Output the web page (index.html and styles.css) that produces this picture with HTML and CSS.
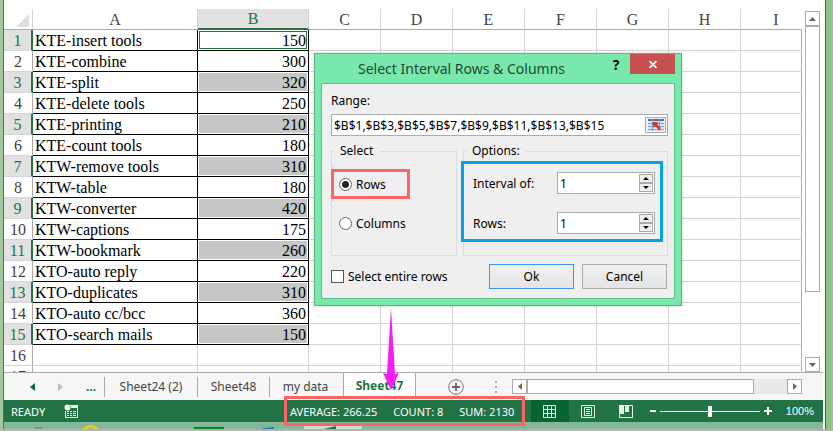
FILE: index.html
```html
<!DOCTYPE html>
<html lang="en">
<head>
    <meta charset="UTF-8">
    <meta name="viewport" content="width=device-width, initial-scale=1.0">
    <title>Select Interval Rows &amp; Columns</title>
    <link rel="stylesheet" href="styles.css">
</head>
<body>
    <div class="window">
        <div class="workspace">
            <table class="sheet">
                <colgroup>
                    <col class="col-head">
                    <col class="col-a">
                    <col class="col-b">
                    <col class="col-std" span="6">
                    <col>
                </colgroup>
                <thead>
                    <tr><th class="corner"><svg width="13" height="13" viewBox="0 0 13 13"><path d="M13 0V13H0z" fill="#dfdfdf"/></svg></th><th>A</th><th class="active">B</th><th>C</th><th>D</th><th>E</th><th>F</th><th>G</th><th>H</th><th>I</th></tr>
                </thead>
                <tbody id="rows"></tbody>
            </table>
            <div class="vscroll">
                <button type="button" class="arrow" aria-label="Scroll up"><svg width="7" height="4" viewBox="0 0 7 4"><path d="M0 4L3.500 0L7 4z" fill="#666"/></svg></button>
                <div class="thumb"></div>
                <button type="button" class="arrow" aria-label="Scroll down"><svg width="7" height="4" viewBox="0 0 7 4"><path d="M0 0H7L3.500 4z" fill="#666"/></svg></button>
            </div>
        </div>

        <div class="tabbar">
            <div class="tab-nav">
                <button type="button" aria-label="Previous sheet"><svg width="5" height="8" viewBox="0 0 5 8"><path d="M5 0V8L0 4z" fill="#0f6b3a"/></svg></button>
                <button type="button" aria-label="Next sheet"><svg width="5" height="8" viewBox="0 0 5 8"><path d="M0 0V8L5 4z" fill="#bbb"/></svg></button>
                <button type="button" class="more">...</button>
            </div>
            <button type="button" class="tab tab-wide">Sheet24 (2)</button>
            <button type="button" class="tab">Sheet48</button>
            <button type="button" class="tab">my data</button>
            <button type="button" class="tab current">Sheet47</button>
            <button type="button" class="add" aria-label="New sheet"><svg width="16" height="16" viewBox="0 0 16 16"><circle cx="8" cy="8" r="7.300" fill="none" stroke="#777"/><path d="M8 4V12M4 8H12" stroke="#666" stroke-width="1.800"/></svg></button>
            <svg class="grip" width="3" height="12" viewBox="0 0 3 12"><path d="M0 1h2M0 6h2M0 11h2" stroke="#aaa" stroke-width="2"/></svg>
            <div class="hscroll">
                <button type="button" class="arrow" aria-label="Scroll left"><svg width="4" height="7" viewBox="0 0 4 7"><path d="M4 0V7L0 3.500z" fill="#666"/></svg></button>
                <div class="thumb"></div>
                <button type="button" class="arrow" aria-label="Scroll right"><svg width="4" height="7" viewBox="0 0 4 7"><path d="M0 0V7L4 3.500z" fill="#666"/></svg></button>
            </div>
        </div>

        <div class="status">
            <span class="ready">READY</span>
            <svg class="macro" width="14" height="14" viewBox="0 0 14 14"><path d="M6 1.500H13.500V13.500H1.500V7" fill="none" stroke="#eaf5ee"/><path d="M7 1H14V4H7z" fill="#eaf5ee"/><circle cx="3.500" cy="3.500" r="3" fill="#eaf5ee"/><path d="M3 7.500h2m1 0h2m1 0h3M3 9.500h2m1 0h2m1 0h3M3 11.500h2m1 0h2m1 0h3" stroke="#eaf5ee"/></svg>
            <div class="totals">
                <span>AVERAGE: 266.25</span>
                <span>COUNT: 8</span>
                <span>SUM: 2130</span>
            </div>
            <div class="views">
                <button type="button" class="view on" aria-label="Normal view"><svg width="13" height="13" viewBox="0 0 13 13"><path d="M.5 .5H12.500V12.500H.5zM4.500 0V13M8.500 0V13M0 4.500H13M0 8.500H13" fill="none" stroke="#e6f2ea"/></svg></button>
                <button type="button" class="view" aria-label="Page layout"><svg width="14" height="13" viewBox="0 0 14 13"><path d="M.5 .5H13.500V12.500H.5zM3.500 2.500H10.500V10.500H3.500zM5 4.500H9M5 6.500H9M5 8.500H9" fill="none" stroke="#e6f2ea"/></svg></button>
                <button type="button" class="view" aria-label="Page break preview"><svg width="14" height="13" viewBox="0 0 14 13"><path d="M.5 .5H13.500V12.500H.5z" fill="none" stroke="#e6f2ea"/><path d="M0 0H5V9H0zM6 0H10V7H6z" fill="#e6f2ea"/></svg></button>
            </div>
            <div class="zoom">
                <svg width="6" height="10" viewBox="0 0 6 10"><path d="M0 5H6" stroke="#fff" stroke-width="2"/></svg>
                <input type="range" min="10" max="190" value="100" aria-label="Zoom">
                <svg width="8" height="10" viewBox="0 0 8 10"><path d="M0 5H8M4 1V9" stroke="#fff" stroke-width="2"/></svg>
                <span class="percent">100%</span>
            </div>
        </div>
        <div class="taskbar">
            <svg width="320" height="7" viewBox="0 0 320 7"><path d="M31 5H39V7H31z" fill="#6a9c7c"/><path d="M78 7Q87 -1 95 7H90Q87 4 83 7z" fill="#f2c81c"/><path d="M190 5H220V7H190z" fill="#0a8a0a"/><path d="M260 6L270 5V7H258z" fill="#1c78c8"/></svg>
            <svg class="task-open" width="58" height="7" viewBox="0 0 58 7"><path d="M0 1H58V7H0z" fill="#c5dccf"/><path d="M0 1.500H58" stroke="#fff"/><path d="M20 7L32 4V7z" fill="#217346"/></svg>
        </div>
    </div>

    <form class="dialog">
        <div class="titlebar">
            <h1>Select Interval Rows &amp; Columns</h1>
            <button type="button" class="help">?</button>
            <button type="button" class="close" aria-label="Close"><svg width="8" height="7" viewBox="0 0 8 7"><path d="M.5 0L7.500 7M7.500 0L.5 7" stroke="#fff" stroke-width="1.700"/></svg></button>
        </div>
        <div class="content">
            <label class="range-label" for="range">Range:</label>
            <div class="range-box">
                <input type="text" id="range" value="$B$1,$B$3,$B$5,$B$7,$B$9,$B$11,$B$13,$B$15">
                <button type="button" class="pick" aria-label="Pick range"><svg width="16" height="12" viewBox="0 0 16 12"><path d="M0 0H16V12H0z" fill="#dfe8f6"/><path d="M0 1H16" stroke="#4a6cb0" stroke-width="2"/><path d="M0 4.500H16M0 7.500H16M0 10.500H16M4.500 0V12M11.500 0V12" stroke="#7f9fd4"/><path d="M4.500 3H10L9 5L13 9L11 11L7 7L5.500 9z" fill="#d23a1e"/></svg></button>
            </div>
            <div class="groups">
                <fieldset class="select-group">
                    <legend>Select</legend>
                    <div class="choice marked">
                        <input type="radio" name="axis" id="axis-rows" checked>
                        <label for="axis-rows">Rows</label>
                    </div>
                    <div class="choice">
                        <input type="radio" name="axis" id="axis-columns">
                        <label for="axis-columns">Columns</label>
                    </div>
                </fieldset>
                <fieldset class="options-group">
                    <legend>Options:</legend>
                    <div class="options">
                        <div class="field">
                            <label for="interval">Interval of:</label>
                            <div class="spinner">
                                <input type="text" id="interval" value="1">
                                <div class="steps">
                                    <button type="button" aria-label="Increase interval"><svg width="6" height="3" viewBox="0 0 6 3"><path d="M0 3L3 0L6 3z"/></svg></button>
                                    <button type="button" aria-label="Decrease interval"><svg width="6" height="3" viewBox="0 0 6 3"><path d="M0 0H6L3 3z"/></svg></button>
                                </div>
                            </div>
                        </div>
                        <div class="field">
                            <label for="count">Rows:</label>
                            <div class="spinner">
                                <input type="text" id="count" value="1">
                                <div class="steps">
                                    <button type="button" aria-label="Increase rows"><svg width="6" height="3" viewBox="0 0 6 3"><path d="M0 3L3 0L6 3z"/></svg></button>
                                    <button type="button" aria-label="Decrease rows"><svg width="6" height="3" viewBox="0 0 6 3"><path d="M0 0H6L3 3z"/></svg></button>
                                </div>
                            </div>
                        </div>
                    </div>
                </fieldset>
            </div>
            <div class="footer">
                <input type="checkbox" id="entire">
                <label for="entire">Select entire rows</label>
                <button type="button" class="btn default">Ok</button>
                <button type="button" class="btn">Cancel</button>
            </div>
        </div>
    </form>

    <svg class="pointer" width="16" height="82" viewBox="0 0 16 82"><path d="M8 0L12 66L16 65L8 82L0 65L4 66z" fill="#f51cf8"/></svg>

    <script src="script.js"></script>
</body>
</html>
```
FILE: styles.css
```css
* {
    box-sizing: border-box;
}

body {
    margin: 0;
    height: 100vh;
    font-family: "Noto Sans", sans-serif;
    font-size: 12px;
    color: #000;
    background-color: #b4b4b4;
    overflow: hidden;
}

button {
    display: flex;
    align-items: center;
    justify-content: center;
    padding: 0;
    border: none;
    background: none;
    font: inherit;
    color: inherit;
}

svg {
    display: block;
    flex: none;
}

.window {
    display: flex;
    flex-direction: column;
    height: calc(100vh - 2px);
    margin-right: 2px;
    padding: 0 3px 0 1px;
    border-left: 3px solid #a3c79c;
    border-right: 5px solid #88c57f;
    box-shadow: inset 1px 0 #666, inset -1px 0 #3f6b48;
    background-color: #fff;
}

/* sheet */
.workspace {
    flex: 1;
    min-height: 0;
    display: flex;
    gap: 3px;
    padding: 9px 3px 0 0;
    overflow: hidden;
    border-bottom: 1px solid #ababab;
}

.sheet {
    flex: 1;
    height: 0;
    table-layout: fixed;
    border-collapse: separate;
    border-spacing: 0;
    font-family: "Liberation Serif", serif;
    font-size: 16px;
    line-height: 18px;
}

.col-head {
    width: 29px;
}

.col-a {
    width: 165px;
}

.col-b {
    width: 111px;
}

.col-std {
    width: 72px;
}

.sheet th,
.sheet td {
    height: 21px;
    padding: 2px 0 0;
    border-right: 1px solid #d4d4d4;
    border-bottom: 1px solid #d4d4d4;
    font-weight: normal;
    white-space: nowrap;
}

.sheet th {
    color: #444;
    text-align: center;
}

.sheet thead th {
    border-bottom-color: #ababab;
}

.sheet tr > :last-child {
    border-right-color: #ababab;
}

.sheet thead th:last-child {
    padding-left: 10px;
    border-right-color: #fff;
}

.sheet tbody th {
    border-right-color: #ababab;
}

.sheet thead .active {
    padding-top: 1px;
    color: #217346;
    background-color: #e1e1e1;
    border-bottom: 2px solid #217346;
}

.sheet .corner {
    padding-left: 12px;
}

.sheet tbody .active {
    color: #217346;
    background-color: #e1e1e1;
    border-right: 2px solid #217346;
}

.sheet .name {
    padding-left: 2px;
    border-color: #000;
}

.sheet .value {
    padding-right: 2px;
    border-color: #000;
    text-align: right;
}

.sheet .picked {
    background-color: #c6c6c6;
    box-shadow: inset 0 0 0 1px #fff;
}

.sheet .cursor {
    box-shadow: inset 0 0 0 1px #fff, inset 0 0 0 2px #217346;
}

/* scrollbars */
.arrow {
    width: 15px;
    height: 15px;
    border: 1px solid #ababab;
    background-color: #fff;
}

.thumb {
    flex: 1;
    border: 1px solid #ababab;
    background-color: #fff;
}

.vscroll {
    display: flex;
    flex-direction: column;
    width: 15px;
    padding-top: 2px;
}

.vscroll .thumb {
    margin-bottom: 65px;
}

.hscroll {
    flex: 1;
    display: flex;
    background-color: #e9e9e9;
}

.hscroll .thumb {
    margin: 0 33px 0 0;
}

/* sheet tabs */
.tabbar {
    display: flex;
    align-items: center;
    height: 27px;
    padding-right: 21px;
    background-color: #f6f6f6;
    color: #444;
}

.tab-nav {
    display: flex;
    align-items: center;
    gap: 23px;
    width: 100px;
    padding-left: 26px;
}

.more {
    color: #217346;
    font-weight: bold;
}

.tab {
    width: 72px;
    height: 20px;
    border-left: 1px solid #ababab;
}

.tab-wide {
    width: 93px;
}

.tab.current {
    align-self: stretch;
    width: 73px;
    height: 25px;
    margin-left: 2px;
    padding-top: 2px;
    border-right: 1px solid #ababab;
    border-bottom: 2px solid #217346;
    background-color: #fff;
    color: #217346;
    font-weight: bold;
}

.add {
    margin: 0 31px 0 32px;
}

.grip {
    margin-right: 14px;
}

/* status bar */
.status {
    display: flex;
    align-items: center;
    height: 22px;
    background-color: #217346;
    color: #fff;
    font-size: 11px;
}

.ready {
    width: 60px;
    padding-left: 7px;
}

.totals {
    display: flex;
    align-items: center;
    gap: 16px;
    height: 30px;
    margin-left: 206px;
    padding: 0 8px 0 3px;
    border: 3px solid #ff6464;
    position: relative;
    z-index: 1;
    white-space: nowrap;
}

.views {
    display: flex;
    align-self: stretch;
    margin-left: auto;
}

.view {
    width: 38px;
    height: 22px;
}

.view.on {
    background-color: #0a6332;
}

.zoom {
    display: flex;
    align-items: center;
    gap: 4px;
    padding: 0 9px 0 5px;
}

.zoom input {
    width: 100px;
    height: 12px;
    margin: 0;
    appearance: none;
    background: linear-gradient(#fff, #fff) center / 100% 1px no-repeat;
}

.zoom input::-webkit-slider-thumb {
    appearance: none;
    width: 4px;
    height: 11px;
    background-color: #fff;
}

.percent {
    margin-left: 10px;
    font-family: "Liberation Sans", sans-serif;
}

.taskbar {
    display: flex;
    height: 7px;
    background-color: #82b899;
}

.task-open {
    margin-left: -20px;
}

/* dialog */
.dialog {
    position: absolute;
    left: 314px;
    top: 53px;
    width: 368px;
    padding: 0 6px 6px;
    border: 1px solid #5bb585;
    background-color: #78e9ab;
    box-shadow: 0 0 3px rgba(0, 0, 0, 0.2);
}

.titlebar {
    display: flex;
    height: 29px;
}

.titlebar h1 {
    flex: 1;
    margin: 0;
    padding-left: 37px;
    font-size: 14px;
    font-weight: normal;
    line-height: 30px;
    color: #234a36;
    white-space: nowrap;
}

.help {
    width: 28px;
    height: 20px;
    font-size: 14px;
    font-weight: bold;
}

.close {
    width: 45px;
    height: 20px;
    background-color: #c75050;
}

.content {
    padding: 8px 6px 9px 9px;
    border: 1px solid #62bd8b;
    background-color: #efefef;
}

.range-label {
    display: block;
    line-height: 18px;
}

.range-box {
    display: flex;
    align-items: center;
    height: 22px;
    margin-top: 4px;
    padding-right: 1px;
    border: 1px solid #ababab;
    background-color: #fff;
}

.range-box input,
.spinner input {
    flex: 1;
    min-width: 0;
    height: 18px;
    padding: 0 2px;
    border: none;
    outline: none;
    background: none;
    font: inherit;
}

.pick {
    width: 21px;
    height: 16px;
    border: 1px solid #ababab;
    background-color: #f0f0f0;
}

.groups {
    display: flex;
    gap: 6px;
    margin-top: 7px;
}

fieldset {
    min-width: 0;
    height: 113px;
    margin: 0;
    padding: 0;
    border: 1px solid #dcdcdc;
}

legend {
    margin-left: 2px;
    padding: 0 6px;
    line-height: 16px;
}

.select-group {
    width: 126px;
    padding-top: 10px;
}

.options-group {
    flex: 1;
}

.choice {
    display: flex;
    align-items: center;
    gap: 4px;
    width: 79px;
    height: 30px;
    margin-bottom: 9px;
    padding-left: 7px;
}

.choice.marked {
    margin-left: -1px;
    padding-left: 5px;
    border: 3px solid #ff6464;
}

.choice input {
    appearance: none;
    width: 13px;
    height: 13px;
    margin: 0;
    border: 1px solid #666;
    border-radius: 50%;
    background-color: #fff;
}

.choice input:checked {
    background: radial-gradient(circle, #222 3px, #fff 4px);
}

.options {
    display: flex;
    flex-direction: column;
    gap: 18px;
    margin: 2px 4px 0 -3px;
    padding: 8px 5px 5px 9px;
    border: 3px solid #00a2e8;
}

.field {
    display: flex;
    align-items: center;
    justify-content: space-between;
}

.spinner {
    display: flex;
    width: 98px;
    height: 22px;
    align-items: center;
    padding-right: 1px;
    border: 1px solid #ababab;
    background-color: #fff;
}

.steps button {
    width: 14px;
    height: 9px;
    border: 1px solid #ababab;
    background-color: #f0f0f0;
}

.footer {
    display: flex;
    align-items: center;
    gap: 4px;
    margin-top: 8px;
}

.footer input {
    appearance: none;
    width: 13px;
    height: 13px;
    margin: 0;
    border: 1px solid #555;
    background-color: #fff;
}

.footer label {
    flex: 1;
}

.btn {
    width: 85px;
    height: 25px;
    margin-right: 1px;
    border: 1px solid #ababab;
    background: linear-gradient(#f0f0f0, #e4e4e4);
}

.btn.default {
    margin-right: 4px;
    border-color: #3c96f0;
}

.pointer {
    position: absolute;
    left: 383px;
    top: 308px;
}
```
FILE: script.js
```js
const items = [
    ["KTE-insert tools", 150],
    ["KTE-combine", 300],
    ["KTE-split", 320],
    ["KTE-delete tools", 250],
    ["KTE-printing", 210],
    ["KTE-count tools", 180],
    ["KTW-remove tools", 310],
    ["KTW-table", 180],
    ["KTW-converter", 420],
    ["KTW-captions", 175],
    ["KTW-bookmark", 260],
    ["KTO-auto reply", 220],
    ["KTO-duplicates", 310],
    ["KTO-auto cc/bcc", 360],
    ["KTO-search mails", 150]
];

const rows = document.getElementById("rows");

for (let i = 0; i < 17; i++) {
    const row = rows.insertRow();
    const head = document.createElement("th");
    head.textContent = i + 1;
    row.appendChild(head);

    for (let c = 0; c < 9; c++) {
        const cell = row.insertCell();
        if (i < items.length && c < 2) {
            cell.textContent = items[i][c];
            cell.className = c === 0 ? "name" : "value";
        }
    }

    // every second row is selected
    if (i < items.length && i % 2 === 0) {
        head.className = "active";
        row.cells[2].classList.add(i === 0 ? "cursor" : "picked");
    }
}
```
